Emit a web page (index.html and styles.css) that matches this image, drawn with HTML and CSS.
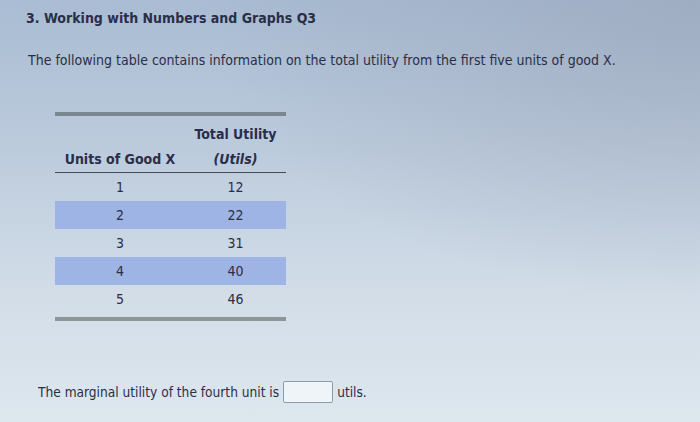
FILE: index.html
```html
<!DOCTYPE html>
<html>
<head>
<meta charset="utf-8">
<link rel="stylesheet" href="styles.css">
</head>
<body>
<div class="page">
  <h1 class="title">3. Working with Numbers and Graphs Q3</h1>
  <p class="intro">The following table contains information on the total utility from the first five units of good X.</p>
  <div class="table-wrap">
    <table class="data">
      <colgroup><col class="col1"><col class="col2"></colgroup>
      <thead>
        <tr class="h1"><th></th><th>Total Utility</th></tr>
        <tr class="h2"><th>Units of Good X</th><th><em>(Utils)</em></th></tr>
      </thead>
      <tbody>
        <tr><td>1</td><td>12</td></tr>
        <tr class="band"><td>2</td><td>22</td></tr>
        <tr><td>3</td><td>31</td></tr>
        <tr class="band"><td>4</td><td>40</td></tr>
        <tr class="last"><td>5</td><td>46</td></tr>
      </tbody>
    </table>
  </div>
  <p class="question">The marginal utility of the fourth unit is <span class="answer"></span> utils.</p>
</div>
</body>
</html>
```
FILE: styles.css
```css
html, body {
  margin: 0;
  height: 100%;
}
body {
  font-family: "DejaVu Sans Condensed", "DejaVu Sans", sans-serif;
  color: #2a2e48;
  background:
    radial-gradient(ellipse 500px 300px at 700px 0px, rgba(150,160,180,0.55), rgba(150,160,180,0) 100%),
    linear-gradient(to bottom, #a9bcd3 0%, #bccbdc 35%, #d2dde8 70%, #dde7ee 100%);
  overflow: hidden;
}
.page {
  padding: 9px 0 0 26px;
}
.title {
  margin: 0;
  font-size: 14px;
  font-weight: bold;
  line-height: 18px;
}
.intro {
  margin: 24px 0 0 2px;
  font-size: 14px;
  line-height: 18px;
}
.table-wrap {
  margin: 43px 0 0 29px;
  width: 231px;
}
.data {
  width: 231px;
  table-layout: fixed;
  border-collapse: collapse;
  border-top: 4px solid #7d8790;
  border-bottom: 4px solid #8d9597;
  font-size: 14px;
}
.col1 { width: 130px; }
.col2 { width: 101px; }
.data th {
  font-size: 14px;
  font-weight: bold;
  padding: 0;
  text-align: center;
  vertical-align: middle;
}
.data tr.h1 th {
  height: 24px;
  padding-top: 6px;
  vertical-align: middle;
}
.data tr.h2 th {
  height: 26px;
  border-bottom: 1px solid #44485a;
}
.data em {
  font-style: italic;
}
.data td {
  text-align: center;
  height: 28px;
  padding: 0;
}
.data tr.band td {
  background: #9db4e4;
}
.data tr.last td {
  height: 34px;
  vertical-align: top;
  padding-top: 6px;
  box-sizing: border-box;
}
.question {
  margin: 60px 0 0 12px;
  font-size: 13.6px;
  line-height: 22px;
  display: flex;
  align-items: center;
  gap: 4px;
}
.answer {
  display: inline-block;
  width: 48px;
  height: 20px;
  border: 1px solid #8e9aa6;
  background: #eef4f8;
  border-radius: 2px;
}
```
